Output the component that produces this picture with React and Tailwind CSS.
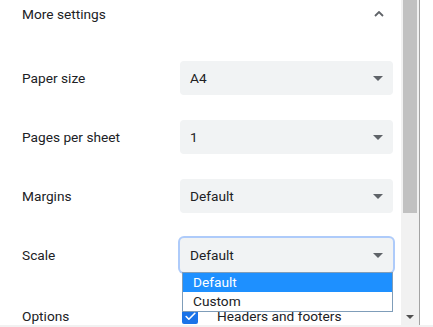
import { Check } from 'lucide-react'

function Caret() {
  return (
    <svg width="10" height="5" viewBox="0 0 10 5" className="shrink-0">
      <path d="M0 0 L10 0 L5 5 Z" fill="#5f6368" />
    </svg>
  )
}

function Select({ value, focused }) {
  return (
    <div
      className={
        'w-[213px] h-[34px] rounded-[4px] bg-[#f1f3f4] flex items-center justify-between pl-[10px] pr-[10px] ' +
        (focused ? 'ring-2 ring-[#aecbfa]' : '')
      }
    >
      <span className="text-[13.7px] text-[#202124]">{value}</span>
      <Caret />
    </div>
  )
}

function Row({ label, value, focused, children }) {
  return (
    <div className="relative flex items-center shrink-0">
      <div className="w-[158px] text-[13.7px] text-[#202124]">{label}</div>
      <Select value={value} focused={focused} />
      {children}
    </div>
  )
}

export default function App() {
  return (
    <div className="w-[433px] h-[327px] overflow-hidden bg-white flex flex-col font-['Roboto',sans-serif]">
      <div className="flex flex-1 min-h-0">
        <div className="w-[401px] pl-[22px] flex flex-col overflow-hidden">
          <div className="h-[28px] shrink-0 flex items-center justify-between pr-[17px]">
            <span className="text-[13.7px] text-[#202124]">More settings</span>
            <svg width="10" height="6" viewBox="0 0 10 6">
              <path d="M1 5 L5 1 L9 5" fill="none" stroke="#5f6368" strokeWidth="1.8" />
            </svg>
          </div>
          <div className="mt-[33px] shrink-0 flex flex-col gap-[25px]">
            <Row label="Paper size" value="A4" />
            <Row label="Pages per sheet" value="1" />
            <Row label="Margins" value="Default" />
            <Row label="Scale" value="Default" focused>
              <div className="absolute left-[160px] top-[34px] w-[211px] border border-[#7f9db9] bg-white z-10 text-[13.7px] leading-[19px]">
                <div className="bg-[#1e90ff] text-white pl-[10px] h-[19px]">Default</div>
                <div className="text-[#202124] pl-[10px] h-[19px]">Custom</div>
              </div>
            </Row>
          </div>
          <div className="mt-[34px] shrink-0 flex items-center">
            <div className="w-[160px] text-[13.7px] text-[#202124]">Options</div>
            <div className="w-[16px] h-[16px] rounded-[2px] bg-[#1a73e8] flex items-center justify-center">
              <Check className="w-[13px] h-[13px] text-white" strokeWidth={3} />
            </div>
            <span className="ml-[19px] text-[13.7px] text-[#202124]">Headers and footers</span>
          </div>
        </div>
        <div className="w-[18px] bg-[#f1f1f1] flex flex-col items-center">
          <div className="w-[14px] h-[213px] bg-[#c1c1c1]" />
          <div className="flex-1" />
          <svg width="8" height="4" viewBox="0 0 8 4" className="mb-[6px]">
            <path d="M0 0 L8 0 L4 4 Z" fill="#505050" />
          </svg>
        </div>
        <div className="w-[1px] bg-[#a3a3a3]" />
        <div className="flex-1 bg-white" />
      </div>
      <div className="h-[2px] bg-[#f1f1f1]" />
    </div>
  )
}
